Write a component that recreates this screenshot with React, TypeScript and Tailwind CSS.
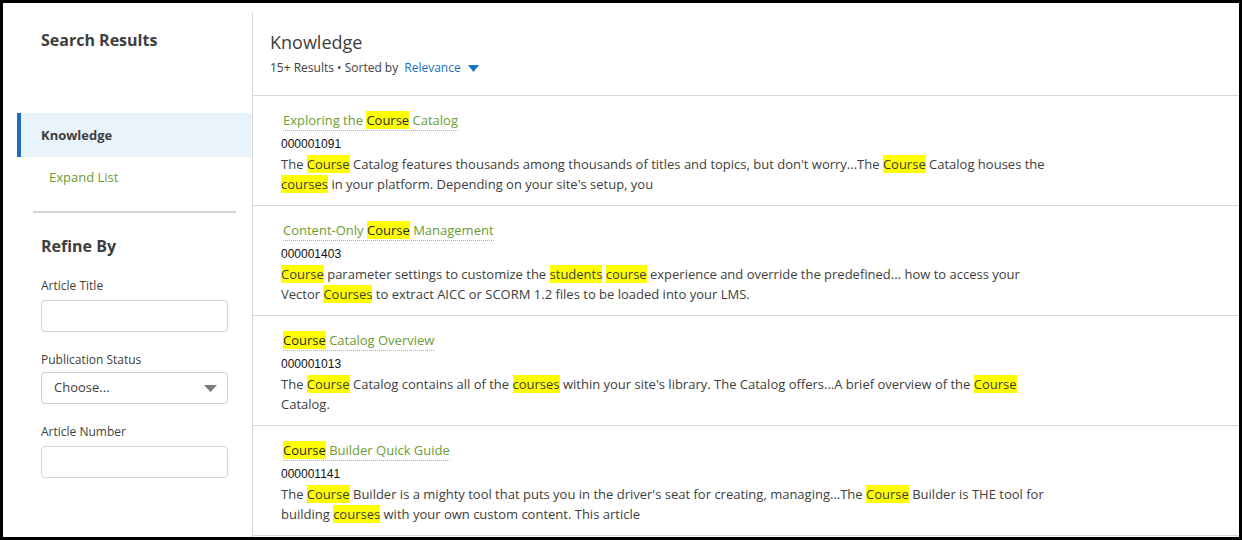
import React from "react";

const FONT = { fontFamily: '"Open Sans", "Noto Sans", sans-serif' };

function hl(text: string, markClass: string) {
  const parts = text.split(/(\[[^\]]+\])/);
  return parts.map((p, i) =>
    p.startsWith("[") ? (
      <span key={i} className={markClass}>
        {p.slice(1, -1)}
      </span>
    ) : (
      <React.Fragment key={i}>{p}</React.Fragment>
    )
  );
}

const results = [
  {
    title: "Exploring the [Course] Catalog",
    num: "000001091",
    lines: [
      "The [Course] Catalog features thousands among thousands of titles and topics, but don't worry...The [Course] Catalog houses the",
      "[courses] in your platform. Depending on your site's setup, you",
    ],
  },
  {
    title: "Content-Only [Course] Management",
    num: "000001403",
    lines: [
      "[Course] parameter settings to customize the [students] [course] experience and override the predefined... how to access your",
      "Vector [Courses] to extract AICC or SCORM 1.2 files to be loaded into your LMS.",
    ],
  },
  {
    title: "[Course] Catalog Overview",
    num: "000001013",
    lines: [
      "The [Course] Catalog contains all of the [courses] within your site's library. The Catalog offers...A brief overview of the [Course]",
      "Catalog.",
    ],
  },
  {
    title: "[Course] Builder Quick Guide",
    num: "000001141",
    lines: [
      "The [Course] Builder is a mighty tool that puts you in the driver's seat for creating, managing...The [Course] Builder is THE tool for",
      "building [courses] with your own custom content. This article",
    ],
  },
];

export default function App() {
  return (
    <div className="w-[1242px] h-[540px] bg-black p-[3px] overflow-hidden" style={FONT}>
      <div className="w-full h-full bg-white flex overflow-hidden">
        {/* Sidebar */}
        <div className="w-[249px] shrink-0 flex flex-col pt-[25px]">
          <div className="pl-[38px] text-[16px] leading-[24px] font-bold text-[#3e3e3c]">
            Search Results
          </div>
          <div className="mt-[61px] ml-[14px] h-[44px] bg-[#e8f3fc] border-l-4 border-[#1b6fc2] flex items-center pl-[20px] pt-[2px] text-[13px] font-bold text-[#3e3e3c]">
            Knowledge
          </div>
          <div className="mt-[10px] pl-[46px] text-[13px] leading-[20px] text-[#6c9d31]">
            Expand List
          </div>
          <div className="mt-[24px] ml-[30px] w-[203px] h-[2px] bg-[#d6d6d6]" />
          <div className="mt-[21px] pl-[38px] text-[16px] leading-[24px] font-bold text-[#3e3e3c]">
            Refine By
          </div>
          <div className="pl-[38px] flex flex-col">
            <div className="mt-[19px] text-[12px] leading-[18px] text-[#3e3e3c]">Article Title</div>
            <div className="mt-[5px] w-[187px] h-[32px] border border-[#d4d4d4] rounded-[4px] bg-white" />
            <div className="mt-[19px] text-[12px] leading-[18px] text-[#3e3e3c]">Publication Status</div>
            <div className="mt-[3px] w-[187px] h-[32px] border border-[#cfcfcf] rounded-[4px] bg-white flex items-center justify-between pl-[12px] pr-[10px]">
              <span className="text-[13px] text-[#3e3e3c]">Choose...</span>
              <svg width="13" height="7" viewBox="0 0 13 7">
                <path d="M0 0 L13 0 L6.5 7 Z" fill="#7a7a7a" />
              </svg>
            </div>
            <div className="mt-[19px] text-[12px] leading-[18px] text-[#3e3e3c]">Article Number</div>
            <div className="mt-[5px] w-[187px] h-[32px] border border-[#d4d4d4] rounded-[4px] bg-white" />
          </div>
        </div>

        {/* Main */}
        <div className="flex-1 mt-[9px] border-l border-[#d8d8d8] flex flex-col">
          <div className="pl-[17px] pt-[18px] pb-[18px] border-b border-[#d8d8d8]">
            <div className="text-[18px] leading-[24px] text-[#3e3e3c]">Knowledge</div>
            <div className="mt-[5px] text-[12px] leading-[18px] text-[#3e3e3c] flex items-center">
              <span>15+ Results • Sorted by</span>
              <span className="ml-[6px] text-[#1a72c7]">Relevance</span>
              <svg className="ml-[7px]" width="11" height="7" viewBox="0 0 11 7">
                <path d="M0 0 L11 0 L5.5 7 Z" fill="#1a72c7" />
              </svg>
            </div>
          </div>
          {results.map((r) => (
            <div key={r.num} className="pl-[28px] pt-[13px] border-b border-[#d8d8d8] h-[110px] shrink-0">
              <div className="h-[20px] leading-[20px] ml-[2px]">
                <span className="text-[13px] text-[#6c9d31] border-b border-dotted border-[#a9b98c] pb-[1px]">
                  {hl(r.title, "bg-[#ffff00] text-[#2b2b2b]")}
                </span>
              </div>
              <div
                className="mt-[5px] h-[20px] leading-[20px] text-[12px] text-[#111]"
                style={{ fontFamily: '"Liberation Sans", Arial, sans-serif' }}
              >
                {r.num}
              </div>
              <div className="text-[13px] leading-[20px] text-[#3e3e3c]">
                {r.lines.map((l, i) => (
                  <div key={i} className="whitespace-nowrap">
                    {hl(l, "bg-[#ffff00]")}
                  </div>
                ))}
              </div>
            </div>
          ))}
        </div>
      </div>
    </div>
  );
}
